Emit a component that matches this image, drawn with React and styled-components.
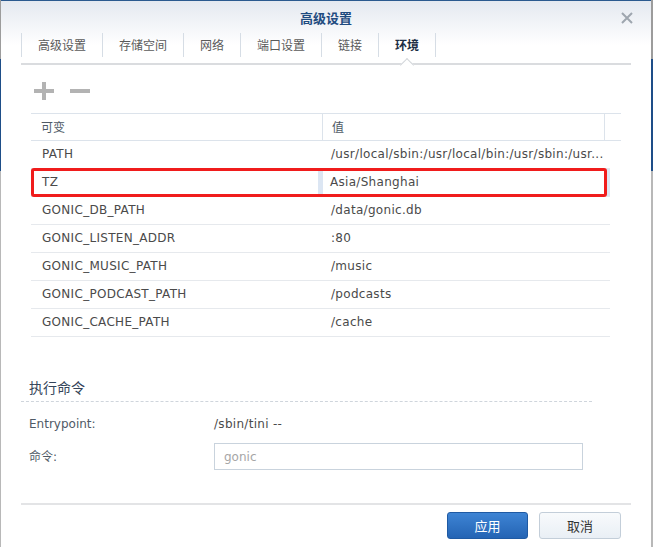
import React from "react";
import styled, { createGlobalStyle } from "styled-components";

const GlobalStyle = createGlobalStyle`
  html, body {
    margin: 0;
    height: 100%;
  }
  body {
    background: linear-gradient(
      to bottom,
      #9c9c9c 0,
      #9c9c9c 59px,
      #1e4e88 59px,
      #1e4e88 171px,
      #b8b8b8 171px
    );
    font-family: "DejaVu Sans", "Noto Sans CJK SC", sans-serif;
    font-size: 12px;
    color: #4a4a4a;
  }
`;

const Dialog = styled.div`
  position: relative;
  margin-left: 1px;
  width: 650px;
  height: 547px;
  box-sizing: border-box;
  border-top: 1px solid #2b5a8f;
  background: linear-gradient(to bottom, #e4e9f0 0, #ffffff 44px);
  display: flex;
  flex-direction: column;
`;

const Header = styled.div`
  height: 32px;
  box-sizing: border-box;
  padding-top: 7px;
  text-align: center;
  font-family: "Noto Sans CJK SC", sans-serif;
  font-size: 13px;
  font-weight: bold;
  line-height: 20px;
  color: #1f4b80;
`;

const Close = styled.button`
  position: absolute;
  top: 11px;
  right: 18px;
  width: 12px;
  height: 12px;
  padding: 0;
  border: none;
  background: none;
  display: flex;
`;

const Tabs = styled.div`
  margin: 0 20px;
  height: 32px;
  box-sizing: border-box;
  border-bottom: 2px solid #dadcdf;
  display: flex;
  align-items: flex-start;
`;

const Tab = styled.div`
  position: relative;
  height: 24px;
  line-height: 24px;
  padding: 0 16px;
  border-left: 1px solid #d6dde5;
  font-family: "Noto Sans CJK SC", sans-serif;
  font-size: 12px;
  color: ${(p) => (p.$active ? "#1c2e45" : "#5a5a5a")};
  font-weight: ${(p) => (p.$active ? "bold" : "normal")};
  &:last-child {
    border-right: 1px solid #d6dde5;
  }
  ${(p) =>
    p.$active &&
    `
    &::after {
      content: "";
      position: absolute;
      left: 50%;
      bottom: -13px;
      width: 9px;
      height: 9px;
      margin-left: -5px;
      background: #fff;
      border-left: 1px solid #d3d6da;
      border-top: 1px solid #d3d6da;
      transform: rotate(45deg);
    }
  `}
`;

const Body = styled.div`
  flex: 1;
  padding: 0 20px;
`;

const Toolbar = styled.div`
  height: 48px;
  box-sizing: border-box;
  padding: 17px 0 0 13px;
  display: flex;
  gap: 16px;
`;

const ToolIcon = styled.span`
  position: relative;
  width: 20px;
  height: 18px;
  &::before {
    content: "";
    position: absolute;
    left: 0;
    top: 7px;
    width: 20px;
    height: 4px;
    background: #b3b3b3;
  }
  ${(p) =>
    p.$plus &&
    `
    &::after {
      content: "";
      position: absolute;
      left: 8px;
      top: 0;
      width: 4px;
      height: 18px;
      background: #b3b3b3;
    }
  `}
`;

const Table = styled.div`
  margin-left: 10px;
  width: 590px;
`;

const HeadRow = styled.div`
  display: grid;
  grid-template-columns: 291px 282px 17px;
  border-top: 1px solid #dce3eb;
  border-bottom: 1px solid #dce3eb;
`;

const HeadCell = styled.div`
  height: 26px;
  line-height: 26px;
  padding-left: ${(p) => (p.$first ? "10px" : "9px")};
  border-left: ${(p) => (p.$first ? "none" : "1px solid #dce3eb")};
  font-family: "Noto Sans CJK SC", sans-serif;
  color: #4f5a66;
`;

const Row = styled.div`
  position: relative;
  width: 579px;
  height: 28px;
  box-sizing: border-box;
  border-bottom: 1px solid #e6e9ed;
  display: grid;
  grid-template-columns: 291px 288px;
  background: ${(p) => (p.$editing ? "#dce6f3" : "transparent")};
`;

const Cell = styled.div`
  line-height: 27px;
  padding: 0 4px 0 ${(p) => (p.$first ? "11px" : "9px")};
  white-space: nowrap;
  overflow: hidden;
  text-overflow: ellipsis;
  letter-spacing: 0.3px;
  color: #4a4a4a;
`;

const EditCell = styled(Cell)`
  background: #fff;
  margin: 1px 4px 1px ${(p) => (p.$first ? "2px" : "1px")};
  line-height: 25px;
  padding-left: ${(p) => (p.$first ? "9px" : "7px")};
`;

const Highlight = styled.div`
  position: absolute;
  left: 0;
  top: -1px;
  width: 576px;
  height: 29px;
  box-sizing: border-box;
  border: 3px solid #f01c1c;
  border-radius: 3px;
  pointer-events: none;
`;

const Section = styled.div`
  margin-top: 40px;
  width: 571px;
`;

const SectionTitle = styled.div`
  padding: 0 0 4px 8px;
  font-family: "Noto Sans CJK SC", sans-serif;
  font-size: 14px;
  line-height: 20px;
  color: #34455a;
  border-bottom: 1px dashed #cfd5dc;
`;

const FormRow = styled.div`
  display: flex;
  align-items: center;
  margin-top: ${(p) => p.$gap}px;
  padding-left: 8px;
`;

const Label = styled.div`
  width: 185px;
  line-height: 20px;
  color: #4f5a66;
`;

const Value = styled.div`
  line-height: 20px;
  color: #4a4a4a;
  letter-spacing: 0.3px;
`;

const Input = styled.input`
  width: 369px;
  height: 27px;
  box-sizing: border-box;
  border: 1px solid #c9d3dd;
  padding: 0 9px;
  font-family: "DejaVu Sans", sans-serif;
  font-size: 12px;
  outline: none;
  &::placeholder {
    color: #a6a6a6;
  }
`;

const Footer = styled.div`
  height: 44px;
  box-sizing: border-box;
  margin: 0 20px;
  border-top: 2px solid #e3e4e6;
  padding: 7px 10px 0 0;
  display: flex;
  justify-content: flex-end;
  gap: 11px;
`;

const Button = styled.button`
  width: ${(p) => (p.$primary ? "81px" : "82px")};
  height: 27px;
  border-radius: 3px;
  font-family: "Noto Sans CJK SC", sans-serif;
  font-size: 13px;
  cursor: pointer;
  border: 1px solid ${(p) => (p.$primary ? "#1f5aa3" : "#c3ced9")};
  color: ${(p) => (p.$primary ? "#fff" : "#333")};
  background: ${(p) =>
    p.$primary
      ? "linear-gradient(to bottom, #3e84d4, #2464b4)"
      : "linear-gradient(to bottom, #f8fafc, #e9eff5)"};
`;

const tabs = ["高级设置", "存储空间", "网络", "端口设置", "链接", "环境"];

// the grid shows PATH already shortened, as in the screenshot
const envs = [
  ["PATH", "/usr/local/sbin:/usr/local/bin:/usr/sbin:/usr..."],
  ["TZ", "Asia/Shanghai", true],
  ["GONIC_DB_PATH", "/data/gonic.db"],
  ["GONIC_LISTEN_ADDR", ":80"],
  ["GONIC_MUSIC_PATH", "/music"],
  ["GONIC_PODCAST_PATH", "/podcasts"],
  ["GONIC_CACHE_PATH", "/cache"],
];

const App = () => {
  return (
    <>
      <GlobalStyle />
      <Dialog>
        <Header>高级设置</Header>
        <Close aria-label="close">
          <svg width="12" height="12" viewBox="0 0 12 12">
            <path d="M1 1L11 11M11 1L1 11" stroke="#9ea6af" strokeWidth="2" />
          </svg>
        </Close>
        <Tabs>
          {tabs.map((t, i) => (
            <Tab key={t} $active={i === tabs.length - 1}>
              {t}
            </Tab>
          ))}
        </Tabs>
        <Body>
          <Toolbar>
            <ToolIcon $plus />
            <ToolIcon />
          </Toolbar>
          <Table>
            <HeadRow>
              <HeadCell $first>可变</HeadCell>
              <HeadCell>值</HeadCell>
              <HeadCell />
            </HeadRow>
            {envs.map(([k, v, editing]) =>
              editing ? (
                <Row key={k} $editing>
                  <EditCell $first>{k}</EditCell>
                  <EditCell>{v}</EditCell>
                  <Highlight />
                </Row>
              ) : (
                <Row key={k}>
                  <Cell $first>{k}</Cell>
                  <Cell>{v}</Cell>
                </Row>
              )
            )}
          </Table>
          <Section>
            <SectionTitle>执行命令</SectionTitle>
            <FormRow $gap={12}>
              <Label>Entrypoint:</Label>
              <Value>/sbin/tini --</Value>
            </FormRow>
            <FormRow $gap={9}>
              <Label>命令:</Label>
              <Input placeholder="gonic" />
            </FormRow>
          </Section>
        </Body>
        <Footer>
          <Button $primary>应用</Button>
          <Button>取消</Button>
        </Footer>
      </Dialog>
    </>
  );
};

export default App;
